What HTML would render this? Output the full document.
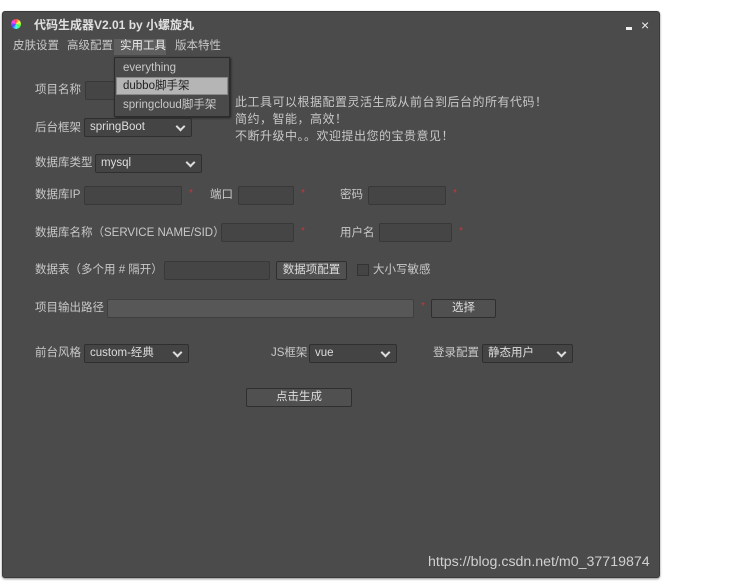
<!DOCTYPE html>
<html><head><meta charset="utf-8"><style>
*{margin:0;padding:0;box-sizing:border-box}
body{width:744px;height:585px;background:#fff;position:relative;overflow:hidden;font-family:"Liberation Sans","Noto Sans CJK SC",sans-serif;font-size:11.5px;color:#c8c8c8}
#win{position:absolute;left:2px;top:11px;width:658px;height:567px;background:#4b4b4b;border:1px solid #3a3a3a;border-radius:3px;box-shadow:0 1px 2px #888}
.a{position:absolute;white-space:nowrap;line-height:14px}
.in{position:absolute;background:#454545;border:1px solid #383838;border-radius:2px;height:19px}
.sel{position:absolute;background:#444;border:1px solid #2f2f2f;border-radius:2px;height:19px;padding-left:5px;line-height:17px;color:#ddd}
.sel:after{content:"";position:absolute;right:7px;top:4px;width:5px;height:5px;border-right:2px solid #ddd;border-bottom:2px solid #ddd;transform:rotate(45deg)}
.btn{position:absolute;background:#505050;border:1px solid #2f2f2f;border-radius:2px;height:19px;text-align:center;line-height:17px;color:#ddd}
.st{position:absolute;color:#c0393b;font-size:10px}
</style></head><body>
<div id="win"></div>
<div class="a" style="left:11px;top:19px;width:10px;height:10px;border-radius:50%;background:conic-gradient(#f44,#ff4,#4f4,#4ff,#44f,#f4f,#f44)"></div>
<div class="a" style="left:34px;top:18px;font-weight:bold;font-size:12px;color:#e0e0e0">代码生成器V2.01 by 小螺旋丸</div>
<div class="a" style="left:626px;top:27px;width:6px;height:3px;background:#eee"></div>
<div class="a" style="left:641px;top:18px;color:#eee;font-size:14px">×</div>
<div class="a" style="left:13px;top:39px">皮肤设置</div>
<div class="a" style="left:67px;top:39px">高级配置</div>
<div class="a" style="left:114px;top:39px;width:52px;height:16px;background:#5e5e5e;padding-left:6px;color:#eee">实用工具</div>
<div class="a" style="left:175px;top:39px">版本特性</div>
<div class="in" style="left:85px;top:81px;width:35px"></div>
<div class="a" style="left:35px;top:83px">项目名称</div>
<div class="a" style="left:114px;top:57px;width:116px;height:60px;background:#4a4a4a;border:1px solid #2c2c2c;box-shadow:1px 1px 2px #222"></div>
<div class="a" style="left:123px;top:61px">everything</div>
<div class="a" style="left:116px;top:77px;width:112px;height:18px;background:#b5b5b5;border:1px solid #888"></div>
<div class="a" style="left:123px;top:79px;color:#222">dubbo脚手架</div>
<div class="a" style="left:123px;top:98px">springcloud脚手架</div>
<div class="a" style="left:235px;top:94px;line-height:17px;font-size:12px;letter-spacing:0.5px">此工具可以根据配置灵活生成从前台到后台的所有代码！<br>简约，智能，高效！<br>不断升级中。。欢迎提出您的宝贵意见！</div>
<div class="a" style="left:35px;top:121px">后台框架</div>
<div class="sel" style="left:84px;top:118px;width:108px">springBoot</div>
<div class="a" style="left:35px;top:156px">数据库类型</div>
<div class="sel" style="left:95px;top:154px;width:107px">mysql</div>
<div class="a" style="left:35px;top:188px">数据库IP</div>
<div class="in" style="left:84px;top:186px;width:98px"></div><div class="st" style="left:189px;top:188px">*</div>
<div class="a" style="left:210px;top:188px">端口</div>
<div class="in" style="left:238px;top:186px;width:56px"></div><div class="st" style="left:301px;top:188px">*</div>
<div class="a" style="left:340px;top:188px">密码</div>
<div class="in" style="left:368px;top:186px;width:78px"></div><div class="st" style="left:453px;top:188px">*</div>
<div class="a" style="left:35px;top:226px">数据库名称（SERVICE NAME/SID）</div>
<div class="in" style="left:221px;top:223px;width:73px"></div><div class="st" style="left:301px;top:226px">*</div>
<div class="a" style="left:340px;top:226px">用户名</div>
<div class="in" style="left:379px;top:223px;width:73px"></div><div class="st" style="left:459px;top:226px">*</div>
<div class="a" style="left:35px;top:263px">数据表（多个用 # 隔开）</div>
<div class="in" style="left:164px;top:261px;width:106px"></div>
<div class="btn" style="left:276px;top:261px;width:71px">数据项配置</div>
<div class="a" style="left:357px;top:264px;width:12px;height:12px;background:#444;border:1px solid #333"></div>
<div class="a" style="left:373px;top:263px">大小写敏感</div>
<div class="a" style="left:35px;top:301px">项目输出路径</div>
<div class="in" style="left:107px;top:299px;width:307px;background:#575757;border-color:#3f3f3f"></div><div class="st" style="left:421px;top:301px">*</div>
<div class="btn" style="left:431px;top:299px;width:65px">选择</div>
<div class="a" style="left:35px;top:346px">前台风格</div>
<div class="sel" style="left:84px;top:344px;width:105px">custom-经典</div>
<div class="a" style="left:271px;top:346px">JS框架</div>
<div class="sel" style="left:309px;top:344px;width:88px">vue</div>
<div class="a" style="left:433px;top:346px">登录配置</div>
<div class="sel" style="left:482px;top:344px;width:91px">静态用户</div>
<div class="btn" style="left:246px;top:388px;width:106px">点击生成</div>
<div class="a" style="left:428px;top:554px;font-size:14.2px;line-height:16px;color:#d0d0d0;font-family:'Liberation Sans',sans-serif">https://blog.csdn.net/m0_37719874</div>
</body></html>
